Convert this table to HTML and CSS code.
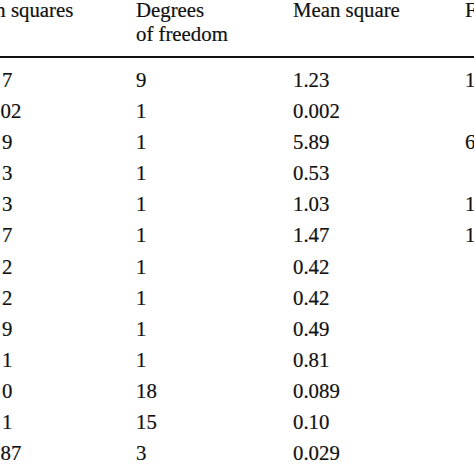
FILE: index.html
```html
<!DOCTYPE html>
<html>
<head>
<meta charset="utf-8">
<link rel="stylesheet" href="styles.css">
</head>
<body>
<div class="table">
  <div class="row head">
    <div class="cell c1"><span class="clip">Sum squares</span></div>
    <div class="cell">Degrees<br>of freedom</div>
    <div class="cell">Mean square</div>
    <div class="cell">F</div>
  </div>
  <div class="body">
    <div class="row"><div class="cell c1">7</div><div class="cell">9</div><div class="cell">1.23</div><div class="cell">1</div></div>
    <div class="row"><div class="cell c1 two">02</div><div class="cell">1</div><div class="cell">0.002</div><div class="cell"></div></div>
    <div class="row"><div class="cell c1">9</div><div class="cell">1</div><div class="cell">5.89</div><div class="cell">6</div></div>
    <div class="row"><div class="cell c1">3</div><div class="cell">1</div><div class="cell">0.53</div><div class="cell"></div></div>
    <div class="row"><div class="cell c1">3</div><div class="cell">1</div><div class="cell">1.03</div><div class="cell">1</div></div>
    <div class="row"><div class="cell c1">7</div><div class="cell">1</div><div class="cell">1.47</div><div class="cell">1</div></div>
    <div class="row"><div class="cell c1">2</div><div class="cell">1</div><div class="cell">0.42</div><div class="cell"></div></div>
    <div class="row"><div class="cell c1">2</div><div class="cell">1</div><div class="cell">0.42</div><div class="cell"></div></div>
    <div class="row"><div class="cell c1">9</div><div class="cell">1</div><div class="cell">0.49</div><div class="cell"></div></div>
    <div class="row"><div class="cell c1">1</div><div class="cell">1</div><div class="cell">0.81</div><div class="cell"></div></div>
    <div class="row"><div class="cell c1">0</div><div class="cell">18</div><div class="cell">0.089</div><div class="cell"></div></div>
    <div class="row"><div class="cell c1">1</div><div class="cell">15</div><div class="cell">0.10</div><div class="cell"></div></div>
    <div class="row"><div class="cell c1 two">87</div><div class="cell">3</div><div class="cell">0.029</div><div class="cell"></div></div>
  </div>
</div>
</body>
</html>
```

FILE: styles.css
```css
html, body {
  margin: 0;
  padding: 0;
  background: #ffffff;
  overflow: hidden;
}

body {
  width: 474px;
  height: 474px;
  font-family: "Liberation Serif", "Times New Roman", serif;
  font-size: 20.8px;
  color: #111111;
  -webkit-text-stroke: 0.2px #111111;
}

.table {
  margin-top: -2px;
}

.row {
  display: grid;
  grid-template-columns: 136px 157px 172px 1fr;
  line-height: 31.1px;
  white-space: nowrap;
}

.head {
  line-height: 24px;
  padding-bottom: 10px;
  border-bottom: 2.5px solid #111;
}

.body {
  padding-top: 6px;
}

.c1 {
  padding-left: 2px;
  overflow: hidden;
}

.c1.two {
  padding-left: 0.5px;
}

.head .c1 {
  padding-left: 0;
}

.clip {
  display: inline-block;
  margin-left: -32.4px;
}
```
